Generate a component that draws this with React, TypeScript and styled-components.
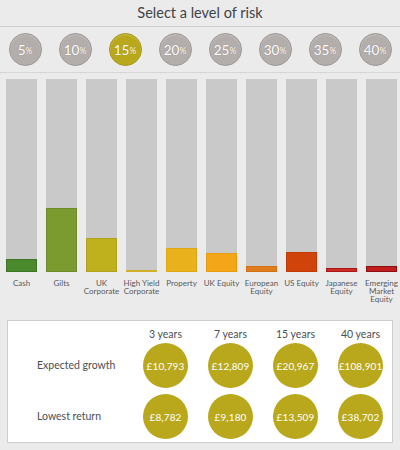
import styled, { createGlobalStyle } from "styled-components";

const GlobalStyle = createGlobalStyle`
  body {
    margin: 0;
    background: #ebebeb;
    font-family: Lato, "Open Sans", sans-serif;
  }
`

const Page = styled.div`
  width: 400px;
  height: 450px;
  overflow: hidden;
  background: #ebebeb;
`

const Title = styled.h1`
  margin: 0;
  height: 26px;
  line-height: 26px;
  text-align: center;
  font-size: 14.5px;
  font-weight: 400;
  color: #3f4447;
  border-bottom: 1px solid #cfcfcf;
`

const RiskRow = styled.div`
  display: grid;
  grid-template-columns: repeat(8, 50px);
  align-items: center;
  justify-items: center;
  height: 45px;
  border-bottom: 1px solid #d6d6d6;
`

const RiskButton = styled.div<{ $active?: boolean }>`
  width: 33px;
  height: 33px;
  border-radius: 50%;
  box-sizing: border-box;
  display: flex;
  align-items: center;
  justify-content: center;
  background: ${p => (p.$active ? "#b9a81c" : "#b3adab")};
  border: 1px solid ${p => (p.$active ? "#a89818" : "#9c9694")};
  box-shadow: inset 0 1px 2px rgba(255, 255, 255, 0.25);
  color: #fff;
  font-size: 13.5px;
  text-shadow: 0 0 1px rgba(0, 0, 0, 0.25);
`

const Pct = styled.span`
  font-size: 8.5px;
  margin-top: 2px;
`

const Chart = styled.div`
  display: grid;
  grid-template-columns: repeat(10, 40px);
  padding: 6px 0 0 6px;
`

const Column = styled.div`
  width: 31px;
  display: flex;
  flex-direction: column;
  align-items: center;
`

const Track = styled.div`
  width: 31px;
  height: 193px;
  background: #c9c9c9;
  display: flex;
  flex-direction: column;
  justify-content: flex-end;
`

const Fill = styled.div<{ $color: string; $edge: string }>`
  background: ${p => p.$color};
  border: 1px solid ${p => p.$edge};
  box-sizing: border-box;
`

const Label = styled.div`
  margin-top: 7px;
  width: 40px;
  text-align: center;
  font-size: 8px;
  line-height: 8px;
  color: #555b5e;
`

const Panel = styled.div`
  margin: 17px 7px 0 7px;
  height: 123px;
  box-sizing: border-box;
  background: #fff;
  border: 1px solid #cdcdcd;
  padding-top: 5px;
  display: grid;
  grid-template-columns: 125px repeat(4, 65px);
  grid-template-rows: 17px 51px 45px;
  align-items: start;
  justify-items: center;
  align-content: start;
`

const RowLabel = styled.div`
  justify-self: start;
  padding-left: 29px;
  line-height: 45px;
  font-size: 10.5px;
  color: #4a4f52;
`

const Year = styled.div`
  line-height: 17px;
  font-size: 10.5px;
  color: #4a4f52;
`

const Value = styled.div`
  width: 45px;
  height: 45px;
  border-radius: 50%;
  background: #b9a81c;
  color: #fff;
  display: flex;
  align-items: center;
  justify-content: center;
  font-size: 10px;
  letter-spacing: 0.1px;
`

const risks = [5, 10, 15, 20, 25, 30, 35, 40]

const assets = [
  { name: "Cash", h: 13, color: "#4b8a2c", edge: "#3d7524" },
  { name: "Gilts", h: 64, color: "#7b9a30", edge: "#6e8b2a" },
  { name: "UK Corporate", h: 34, color: "#bfb01e", edge: "#b0a21a" },
  { name: "High Yield Corporate", h: 2, color: "#d8b830", edge: "#d0b028" },
  { name: "Property", h: 24, color: "#e9b21c", edge: "#dea818" },
  { name: "UK Equity", h: 19, color: "#f2a618", edge: "#e89c14" },
  { name: "European Equity", h: 6, color: "#e07c1c", edge: "#d47018" },
  { name: "US Equity", h: 20, color: "#d0440c", edge: "#c03a08" },
  { name: "Japanese Equity", h: 4, color: "#cc2a22", edge: "#a81818" },
  { name: "Emerging Market Equity", h: 6, color: "#c01e1e", edge: "#8e1010" },
]

const years = ["3 years", "7 years", "15 years", "40 years"]
const growth = ["£10,793", "£12,809", "£20,967", "£108,901"]
const lowest = ["£8,782", "£9,180", "£13,509", "£38,702"]

export default function App() {
  return (
    <Page>
      <GlobalStyle />
      <Title>Select a level of risk</Title>
      <RiskRow>
        {risks.map(r => (
          <RiskButton key={r} $active={r === 15}>
            {r}<Pct>%</Pct>
          </RiskButton>
        ))}
      </RiskRow>
      <Chart>
        {assets.map(a => (
          <Column key={a.name}>
            <Track>
              <Fill $color={a.color} $edge={a.edge} style={{ height: a.h }} />
            </Track>
            <Label>{a.name}</Label>
          </Column>
        ))}
      </Chart>
      <Panel>
        <div />
        {years.map(y => <Year key={y}>{y}</Year>)}
        <RowLabel>Expected growth</RowLabel>
        {growth.map(v => <Value key={v}>{v}</Value>)}
        <RowLabel>Lowest return</RowLabel>
        {lowest.map(v => <Value key={v}>{v}</Value>)}
      </Panel>
    </Page>
  )
}
